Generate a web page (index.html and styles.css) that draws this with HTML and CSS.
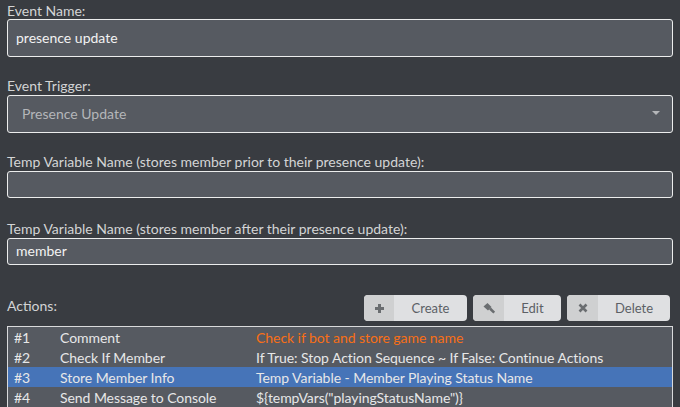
FILE: index.html
```html
<!DOCTYPE html>
<html lang="en">
<head>
    <meta charset="UTF-8">
    <title>Event Editor</title>
    <link rel="stylesheet" href="styles.css">
</head>
<body>
    <div class="form">
        <div class="field name-field">
            <label>Event Name:</label>
            <div class="input tall">presence update</div>
        </div>
        <div class="field trigger-field">
            <label>Event Trigger:</label>
            <div class="input tall select">
                <span>Presence Update</span>
                <i class="caret"></i>
            </div>
        </div>
        <div class="field prior-field">
            <label>Temp Variable Name (stores member prior to their presence update):</label>
            <div class="input"></div>
        </div>
        <div class="field after-field">
            <label>Temp Variable Name (stores member after their presence update):</label>
            <div class="input">member</div>
        </div>
        <div class="actions-head">
            <label>Actions:</label>
            <div class="buttons">
                <button class="btn create">
                    <span class="icon">
                        <svg width="11" height="11" viewBox="0 0 11 11"><path d="M4 1h3v3h3v3H7v3H4V7H1V4h3z" fill="#6a6d70"/></svg>
                    </span>
                    <span class="text">Create</span>
                </button>
                <button class="btn edit">
                    <span class="icon">
                        <svg width="14" height="14" viewBox="0 0 14 14"><path d="M1.5 5.5L5.5 2 9.5 6 6 9.5z" fill="#6a6d70"/><path d="M8 7.5l4.2 4.2" stroke="#6a6d70" stroke-width="2.6" fill="none"/></svg>
                    </span>
                    <span class="text">Edit</span>
                </button>
                <button class="btn delete">
                    <span class="icon">
                        <svg width="10" height="10" viewBox="0 0 10 10"><path d="M1.5 1.5l7 7M8.5 1.5l-7 7" stroke="#6a6d70" stroke-width="2.6" fill="none"/></svg>
                    </span>
                    <span class="text">Delete</span>
                </button>
            </div>
        </div>
        <div class="table">
            <div class="row"><span class="num">#1</span><span class="title">Comment</span><span class="note orange">Check if bot and store game name</span></div>
            <div class="row"><span class="num">#2</span><span class="title">Check If Member</span><span class="note">If True: Stop Action Sequence ~ If False: Continue Actions</span></div>
            <div class="row selected"><span class="num">#3</span><span class="title">Store Member Info</span><span class="note">Temp Variable - Member Playing Status Name</span></div>
            <div class="row"><span class="num">#4</span><span class="title">Send Message to Console</span><span class="note">${tempVars("playingStatusName")}</span></div>
        </div>
    </div>
</body>
</html>
```

FILE: styles.css
```css
html, body {
    height: 407px;
    overflow: hidden;
}

body {
    margin: 0;
    background-color: #393c41;
    color: #dcdddd;
    font-family: Lato, sans-serif;
    font-size: 14px;
}

.form {
    padding: 0 7px;
}

label {
    display: block;
    height: 19px;
    line-height: 20px;
    color: #d3d4d5;
}

.name-field label {
    height: 18px;
    padding-top: 1px;
}

.field {
    margin-bottom: 19px;
}

.prior-field {
    margin-bottom: 21px;
}

.after-field {
    margin-bottom: 30px;
}

.input {
    display: flex;
    align-items: center;
    justify-content: space-between;
    box-sizing: border-box;
    height: 27px;
    padding: 0 8px 2px;
    border: 1px solid #eceded;
    border-radius: 3px;
    background-color: #565a61;
    color: #f2f2f2;
}

.tall {
    height: 38px;
}

.select {
    padding: 0 12px 2px 14px;
    color: #b4b6b9;
}

.caret {
    width: 0;
    height: 0;
    margin-bottom: 1px;
    border-left: 4px solid transparent;
    border-right: 4px solid transparent;
    border-top: 4px solid #b4b6b9;
}

.actions-head {
    display: flex;
    align-items: flex-start;
    justify-content: space-between;
    height: 26px;
    margin-bottom: 5px;
}

.actions-head label {
    margin-top: 1px;
}

.buttons {
    display: flex;
    gap: 6px;
    margin-right: 3px;
}

.btn {
    display: flex;
    align-items: stretch;
    height: 26px;
    padding: 0;
    border: none;
    border-radius: 4px;
    overflow: hidden;
    background-color: #dfe0e2;
    color: #5c6066;
    font-family: Lato, sans-serif;
    font-size: 13px;
}

.create {
    width: 103px;
}

.edit {
    width: 88px;
}

.delete {
    width: 103px;
}

.icon {
    display: flex;
    align-items: center;
    justify-content: center;
    width: 30px;
    background-color: #cfd0d1;
}

.edit .icon,
.delete .icon {
    width: 31px;
}

.text {
    flex: 1;
    line-height: 26px;
    text-align: center;
}

.table {
    box-sizing: border-box;
    height: 90px;
    border: 1px solid #d9dadb;
    background-color: #565a61;
}

.row {
    display: flex;
    height: 20px;
    line-height: 22px;
    padding-left: 6px;
    color: #e6e7e8;
    letter-spacing: -0.06px;
}

.num {
    width: 46px;
}

.title {
    width: 196px;
}

.orange {
    color: #f96f16;
}

.selected {
    background-color: #4674b8;
}
```
